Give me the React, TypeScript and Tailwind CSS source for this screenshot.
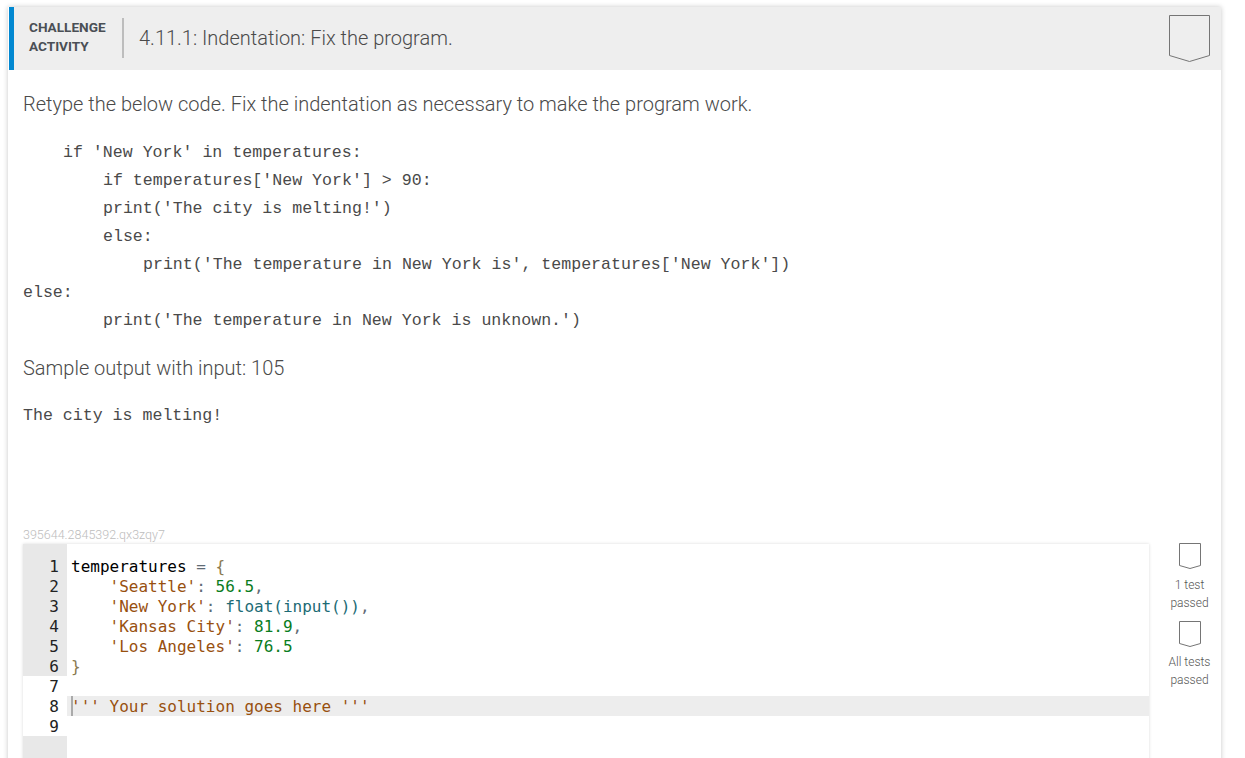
function Badge({ w, h, notch }: { w: number; h: number; notch: number }) {
  return (
    <svg width={w} height={h} viewBox={`0 0 ${w} ${h}`} fill="none" stroke="#757575" strokeWidth={1}>
      <path d={`M0.5 0.5H${w - 0.5}V${h - notch - 0.5}L${w / 2} ${h - 0.5}L0.5 ${h - notch - 0.5}Z`} />
    </svg>
  )
}

const promptLines = [
  { pad: 'pl-10', text: "if 'New York' in temperatures:" },
  { pad: 'pl-20', text: "if temperatures['New York'] > 90:" },
  { pad: 'pl-20', text: "print('The city is melting!')" },
  { pad: 'pl-20', text: 'else:' },
  { pad: 'pl-[120px]', text: "print('The temperature in New York is', temperatures['New York'])" },
  { pad: 'pl-0', text: 'else:' },
  { pad: 'pl-20', text: "print('The temperature in New York is unknown.')" },
]

const str = 'text-[#98500f]'
const num = 'text-[#0a7d1e]'
const op = 'text-[#5f6b75]'

function Gutter({ n, white }: { n: number; white?: boolean }) {
  return <div className={`h-5 pr-2 text-right text-[#222] ${white ? 'bg-white' : 'bg-[#e8e8e8]'}`}>{n}</div>
}

export default function App() {
  return (
    <div className="h-[758px] w-[1245px] overflow-hidden bg-white font-['Roboto',sans-serif]">
      <div className="ml-2 mt-[7px] h-[780px] w-[1213px] bg-white shadow-[0_0_5px_rgba(0,0,0,0.22)]">
        <div className="ml-px flex h-[63px] items-center border-l-[5px] border-l-[#0288d1] bg-[#eeeeee]">
          <div className="mb-[3px] ml-[15px] w-[80px] text-[13.6px] font-bold leading-[19px] text-[#4a4f55]">
            CHALLENGE
            <br />
            ACTIVITY
          </div>
          <div className="mb-0.5 ml-[13px] h-10 w-0.5 bg-[#bdbdbd]" />
          <h1 className="mb-0.5 ml-[15px] text-[20px] font-light text-[#4a4a4a]">4.11.1: Indentation: Fix the program.</h1>
          <div className="ml-auto mr-[11px] mb-px">
            <Badge w={41} h={47} notch={6} />
          </div>
        </div>

        <div className="pl-[15px]">
          <p className="mt-[22px] text-[20px] font-light leading-6 text-[#4a4a4a]">
            Retype the below code. Fix the indentation as necessary to make the program work.
          </p>
          <pre className="mt-[23px] font-['Liberation_Mono',monospace] text-[16.6px] leading-7 text-[#4a4a4a]">
            {promptLines.map((l, i) => (
              <div key={i} className={l.pad}>{l.text}</div>
            ))}
          </pre>
          <p className="mt-[21px] text-[20px] font-light leading-6 text-[#4a4a4a]">Sample output with input: 105</p>
          <pre className="mt-[24px] font-['Liberation_Mono',monospace] text-[16.6px] leading-6 text-[#4a4a4a]">The city is melting!</pre>
          <div className="mt-[99px] text-[12.5px] font-light leading-4 text-[#bdbdbd]">395644.2845392.qx3zqy7</div>

          <div className="mt-px flex">
            <div className="flex h-[300px] w-[1126px] shrink-0 bg-white font-['DejaVu_Sans_Mono',monospace] text-[16px] leading-[22px] shadow-[0_0_3px_rgba(0,0,0,0.15)]">
              <div className="w-11 shrink-0 bg-[#e8e8e8] pt-3">
                {[1, 2, 3, 4, 5, 6].map((n) => <Gutter key={n} n={n} />)}
                {[7, 8, 9].map((n) => <Gutter key={n} n={n} white />)}
              </div>
              <pre className="min-w-0 flex-1 pt-3 font-['DejaVu_Sans_Mono',monospace]">
                <div className="h-5 pl-1 text-black">temperatures <span className={op}>=</span> <span className="text-[#8a7a50]">{'{'}</span></div>
                <div className="h-5 pl-1">    <span className={str}>'Seattle'</span><span className={op}>:</span> <span className={num}>56.5</span><span className={op}>,</span></div>
                <div className="h-5 pl-1">    <span className={str}>'New York'</span><span className={op}>:</span> <span className="text-[#1c6b75]">float(input())</span><span className={op}>,</span></div>
                <div className="h-5 pl-1">    <span className={str}>'Kansas City'</span><span className={op}>:</span> <span className={num}>81.9</span><span className={op}>,</span></div>
                <div className="h-5 pl-1">    <span className={str}>'Los Angeles'</span><span className={op}>:</span> <span className={num}>76.5</span></div>
                <div className="h-5 pl-1 text-[#8a7a50]">{'}'}</div>
                <div className="h-5" />
                <div className={`relative h-5 bg-[#ededed] pl-1 ${str}`}>
                  <span className="absolute left-1 top-0 h-5 w-0.5 bg-[#aaa]" />
                  ''' Your solution goes here '''
                </div>
                <div className="h-5" />
              </pre>
            </div>
            <div className="-mt-px flex w-[81px] shrink-0 flex-col items-center text-xs font-light leading-[18px] text-[#555]">
              <Badge w={22} h={26} notch={3} />
              <div className="mt-[7px] text-center">1 test<br />passed</div>
              <div className="mt-[9px]"><Badge w={22} h={26} notch={3} /></div>
              <div className="mt-[6px] text-center">All tests<br />passed</div>
            </div>
          </div>
        </div>
      </div>
    </div>
  )
}
